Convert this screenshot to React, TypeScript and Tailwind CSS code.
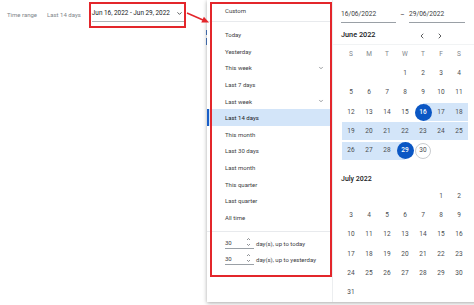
import { ChevronDown, ChevronLeft, ChevronRight } from 'lucide-react';

interface Preset {
  label: string;
  more?: boolean;
  active?: boolean;
}

const presets: Preset[] = [
  { label: 'Today' },
  { label: 'Yesterday' },
  { label: 'This week', more: true },
  { label: 'Last 7 days' },
  { label: 'Last week', more: true },
  { label: 'Last 14 days', active: true },
  { label: 'This month' },
  { label: 'Last 30 days' },
  { label: 'Last month' },
  { label: 'This quarter' },
  { label: 'Last quarter' },
  { label: 'All time' },
];

const weekDays = ['S', 'M', 'T', 'W', 'T', 'F', 'S'];

const rangeStart = 16;
const rangeEnd = 29;
const today = 30;

function DayCell({ day, inJune }: { day: number | null; inJune: boolean }) {
  if (day === null) return <div className="h-[19.2px]" />;
  const isStart = inJune && day === rangeStart;
  const isEnd = inJune && day === rangeEnd;
  const inside = inJune && day > rangeStart && day < rangeEnd;
  const isToday = inJune && day === today;
  const picked = isStart || isEnd;

  return (
    <div className="relative h-[19.2px] flex items-center justify-center">
      {inside && <span className="absolute inset-x-0 top-[0.6px] bottom-[0.6px] bg-[#d3e5f9]" />}
      {isStart && <span className="absolute left-1/2 right-0 top-[0.6px] bottom-[0.6px] bg-[#d3e5f9]" />}
      {isEnd && <span className="absolute left-0 right-1/2 top-[0.6px] bottom-[0.6px] bg-[#d3e5f9]" />}
      {picked && <span className="absolute w-[17px] h-[17px] rounded-full bg-[#0b57c4]" />}
      {isToday && <span className="absolute w-[16px] h-[16px] rounded-full border border-[#c9cccf] bg-white" />}
      <span className={`relative ${picked ? 'text-white font-medium' : 'text-[#4a4d50]'}`}>{day}</span>
    </div>
  );
}

function Month({ lead, days, inJune }: { lead: number; days: number; inJune: boolean }) {
  const cells: (number | null)[] = [];
  for (let i = 0; i < lead; i++) cells.push(null);
  for (let d = 1; d <= days; d++) cells.push(d);
  return (
    <div className="grid grid-cols-[repeat(7,18px)] pl-[9px] text-[6.5px] leading-[9px]">
      {cells.map((d, i) => (
        <DayCell key={i} day={d} inJune={inJune} />
      ))}
    </div>
  );
}

function Spinner() {
  return (
    <svg width="5" height="10" viewBox="0 0 5 10" className="absolute right-[3px] top-[-1px]">
      <path d="M1 3 L2.5 1.5 L4 3" fill="none" stroke="#5f6368" strokeWidth="0.7" />
      <path d="M1 7 L2.5 8.5 L4 7" fill="none" stroke="#5f6368" strokeWidth="0.7" />
    </svg>
  );
}

function DaysInput({ text }: { text: string }) {
  return (
    <div className="flex items-center h-[16px] pl-[18px]">
      <div className="relative w-[29px] h-[11px] border-b border-[#9aa0a6] leading-[9px]">
        <span>30</span>
        <Spinner />
      </div>
      <span className="ml-[2px]">{text}</span>
    </div>
  );
}

export default function App() {
  return (
    <div className="relative w-[474px] h-[305px] overflow-hidden bg-white font-[Roboto,sans-serif] text-[6px]">
      {/* Page bar */}
      <div className="flex items-start pt-[9.5px] pl-[7px] leading-[9px] text-[#80868b]">
        <span>Time range</span>
        <span className="ml-[10px]">Last 14 days</span>
        <div className="ml-[11px] -mt-px flex items-center gap-[6px] border-b border-[#b0b4b8] pb-[3px] pr-[3px] text-[6.4px] text-[#202124]">
          <span>Jun 16, 2022 - Jun 29, 2022</span>
          <ChevronDown size={7} strokeWidth={2.5} />
        </div>
      </div>

      <span className="absolute left-[206px] top-[30px] w-[1.5px] h-[5px] bg-[#4a78c2]" />
      <span className="absolute left-[206px] top-[38px] w-[1.5px] h-[7px] bg-[#4a78c2]" />

      {/* Dropdown panel */}
      <div className="absolute left-[207px] top-0 w-[280px] h-[302px] bg-white shadow-[0_1px_4px_rgba(0,0,0,0.35)] flex text-[#3c4043]">
        <div className="w-[126px] border-r border-[#eceef0]">
          <div className="h-[22px] pt-[5.5px] pl-[18px] leading-[9px] border-b border-[#e8eaed]">Custom</div>
          <div className="pt-[4.5px]">
            {presets.map((p) => (
              <div
                key={p.label}
                className={`flex items-center justify-between h-[16.6px] pr-[8px] ${
                  p.active ? 'bg-[#d3e5f9] border-l-[2px] border-[#1a5fc8] pl-[16px] text-[#202124]' : 'pl-[18px]'
                }`}
              >
                <span>{p.label}</span>
                {p.more && <ChevronDown size={6} strokeWidth={2.5} className="text-[#5f6368]" />}
              </div>
            ))}
          </div>
          <div className="mt-[5px] pt-[3.5px] border-t border-[#e8eaed]">
            <DaysInput text="day(s), up to today" />
            <DaysInput text="day(s), up to yesterday" />
          </div>
        </div>

        <div className="flex-1">
          <div className="flex items-end h-[23px] pl-[8px] leading-[9px] text-[6.6px] text-[#3c4043]">
            <div className="w-[55px] border-b border-[#9aa0a6] pb-[3.5px]">16/06/2022</div>
            <div className="w-[13px] text-center pb-[3.5px]">–</div>
            <div className="w-[56px] border-b border-[#9aa0a6] pb-[3.5px]">29/06/2022</div>
          </div>
          <div className="flex items-center h-[22px] pt-[4px] pl-[8px] border-b border-[#f1f3f4] text-[#202124]">
            <span className="flex-1 font-medium text-[7.3px]">June 2022</span>
            <span className="w-[18px] flex justify-center">
              <ChevronLeft size={8} strokeWidth={2.2} />
            </span>
            <span className="w-[18px] flex justify-center mr-[38px]">
              <ChevronRight size={8} strokeWidth={2.2} />
            </span>
          </div>
          <div className="grid grid-cols-[repeat(7,18px)] pl-[9px] text-[6.5px] leading-[9px] text-[#80868b]">
            {weekDays.map((d, i) => (
              <div key={i} className="h-[19.2px] flex items-center justify-center">
                {d}
              </div>
            ))}
          </div>
          <Month lead={3} days={30} inJune />
          <div className="h-[26.8px] pt-[15px] pl-[8px] leading-[9px] font-medium text-[7px] text-[#202124]">July 2022</div>
          <Month lead={5} days={31} inJune={false} />
        </div>
      </div>

      {/* Annotations */}
      <div className="absolute left-[89px] top-[2px] w-[97px] h-[26px] border-2 border-[#e3262b]" />
      <div className="absolute left-[210px] top-[2px] w-[122px] h-[275px] border-2 border-[#e3262b]" />
      <svg className="absolute left-[185px] top-[8px]" width="28" height="20" viewBox="0 0 28 20">
        <line x1="2" y1="5" x2="18" y2="11.9" stroke="#e3262b" strokeWidth="1.6" />
        <polygon points="24,14.5 16.3,14.6 18.9,8.8" fill="#e3262b" />
      </svg>
    </div>
  );
}
